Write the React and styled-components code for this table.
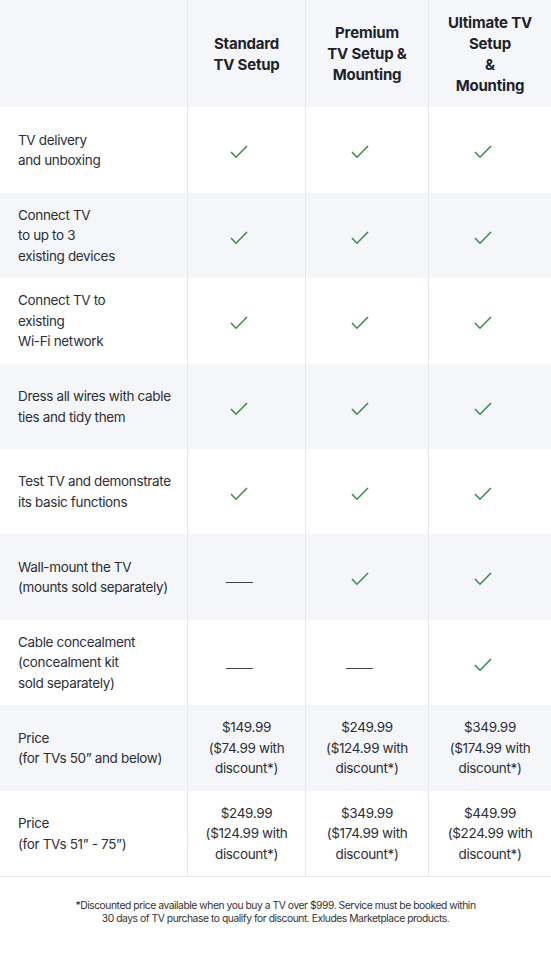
import React from "react";
import styled, { createGlobalStyle } from "styled-components";

const GlobalStyle = createGlobalStyle`
  html, body { margin: 0; padding: 0; background: #fff; }
  body { font-family: Inter, "Liberation Sans", sans-serif; color: #2c3035; }
`;

const Page = styled.div`
  width: 551px;
`;

const Row = styled.div`
  display: grid;
  grid-template-columns: 187px 118px 123px 123px;
  height: ${(p) => p.$h}px;
  background: ${(p) => (p.$shade ? "#f4f6f9" : "#fff")};
`;

const Cell = styled.div`
  display: flex;
  align-items: center;
  justify-content: center;
  text-align: center;
  border-left: 1px solid #e6e8eb;
  font-size: 13.5px;
  line-height: 20.5px;
  letter-spacing: -0.35px;
`;

const Label = styled.div`
  display: flex;
  align-items: center;
  padding-left: 18px;
  font-size: 13.5px;
  line-height: 20.5px;
  letter-spacing: -0.35px;
`;

const HeadCell = styled(Cell)`
  font-size: 15px;
  font-weight: 700;
  line-height: 21px;
  letter-spacing: -0.2px;
  color: #1d232a;
`;

// icons sit a bit left of / below the cell centre, like the original
const Mark = styled.span`
  display: flex;
  margin-right: 15px;
  margin-top: ${(p) => p.$down}px;
`;

// flat line for "not included"
const Dash = styled.span`
  display: block;
  width: 27px;
  height: 1px;
  background: #3f444a;
`;

const Table = styled.div`
  border-bottom: 1px solid #e6e8eb;
`;

const Note = styled.p`
  margin: 0;
  padding: 22px 20px 0;
  text-align: center;
  font-size: 10.3px;
  line-height: 13px;
  letter-spacing: -0.45px;
  color: #333;
`;

const Check = () => (
  <svg width="18" height="14" viewBox="0 0 18 14" fill="none">
    <path d="M1 7 L6 12.2 L17 1" stroke="#3c8c4c" strokeWidth="1.6" />
  </svg>
);

const lines = (arr) =>
  arr.map((t, i) => (
    <React.Fragment key={i}>
      {i > 0 && <br />}
      {t}
    </React.Fragment>
  ));

const features = [
  { label: ["TV delivery", "and unboxing"], has: [1, 1, 1], h: 86 },
  { label: ["Connect TV", "to up to 3", "existing devices"], has: [1, 1, 1], h: 85 },
  { label: ["Connect TV to", "existing", "Wi-Fi network"], has: [1, 1, 1], h: 86 },
  { label: ["Dress all wires with cable", "ties and tidy them"], has: [1, 1, 1], h: 85 },
  { label: ["Test TV and demonstrate", "its basic functions"], has: [1, 1, 1], h: 85 },
  { label: ["Wall-mount the TV", "(mounts sold separately)"], has: [0, 1, 1], h: 86 },
  { label: ["Cable concealment", "(concealment kit", "sold separately)"], has: [0, 0, 1], h: 85 },
];

const prices = [
  {
    label: ["Price", "(for TVs 50\u201D and below)"],
    h: 86,
    cols: [
      ["$149.99", "($74.99 with", "discount*)"],
      ["$249.99", "($124.99 with", "discount*)"],
      ["$349.99", "($174.99 with", "discount*)"],
    ],
  },
  {
    label: ["Price", "(for TVs 51\u201D - 75\u201D)"],
    h: 85,
    cols: [
      ["$249.99", "($124.99 with", "discount*)"],
      ["$349.99", "($174.99 with", "discount*)"],
      ["$449.99", "($224.99 with", "discount*)"],
    ],
  },
];

export default function App() {
  return (
    <Page>
      <GlobalStyle />
      <Table>
        <Row $shade $h={107}>
          <Label />
          <HeadCell>{lines(["Standard", "TV Setup"])}</HeadCell>
          <HeadCell>{lines(["Premium", "TV Setup &", "Mounting"])}</HeadCell>
          <HeadCell>{lines(["Ultimate TV", "Setup", "&", "Mounting"])}</HeadCell>
        </Row>
        {features.map((f, i) => (
          <Row key={i} $shade={i % 2 === 1} $h={f.h}>
            <Label>
              <div>{lines(f.label)}</div>
            </Label>
            {f.has.map((h, j) => (
              <Cell key={j}>
                {h ? (
                  <Mark $down={4}>
                    <Check />
                  </Mark>
                ) : (
                  <Mark $down={11}>
                    <Dash />
                  </Mark>
                )}
              </Cell>
            ))}
          </Row>
        ))}
        {prices.map((p, i) => (
          <Row key={"p" + i} $shade={i === 0} $h={p.h}>
            <Label>
              <div>{lines(p.label)}</div>
            </Label>
            {p.cols.map((c, j) => (
              <Cell key={j}>
                <div>{lines(c)}</div>
              </Cell>
            ))}
          </Row>
        ))}
      </Table>
      <Note>
        *Discounted price available when you buy a TV over $999. Service must be booked within
        <br />
        30 days of TV purchase to qualify for discount. Exludes Marketplace products.
      </Note>
    </Page>
  );
}
